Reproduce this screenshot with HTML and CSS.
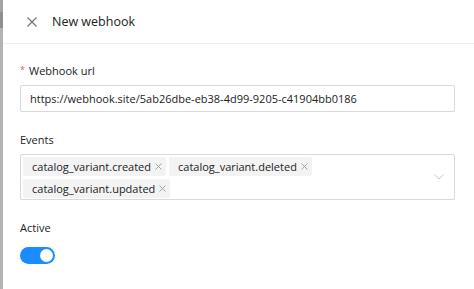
FILE: index.html
```html
<!DOCTYPE html>
<html>
<head>
<meta charset="utf-8">
<link rel="stylesheet" href="styles.css">
</head>
<body>
<div class="page">
  <div class="strip"></div>
  <div class="drawer">
    <div class="header">
      <svg class="close" width="10" height="10" viewBox="0 0 10 10"><path d="M0.5 0.5L9.5 9.5M9.5 0.5L0.5 9.5" stroke="#707070" stroke-width="1.1" fill="none"/></svg>
      <span class="title">New webhook</span>
    </div>
    <div class="body">
      <div class="field">
        <div class="label"><span class="req">*</span>Webhook url</div>
        <div class="input">https://webhook.site/5ab26dbe-eb38-4d99-9205-c41904bb0186</div>
      </div>
      <div class="field">
        <div class="label">Events</div>
        <div class="select">
          <div class="tags">
            <span class="tag">catalog_variant.created<svg class="x" width="7" height="7" viewBox="0 0 7 7"><path d="M0.5 0.5L6.5 6.5M6.5 0.5L0.5 6.5" stroke="#9a9a9a" stroke-width="0.9" fill="none"/></svg></span>
            <span class="tag">catalog_variant.deleted<svg class="x" width="7" height="7" viewBox="0 0 7 7"><path d="M0.5 0.5L6.5 6.5M6.5 0.5L0.5 6.5" stroke="#9a9a9a" stroke-width="0.9" fill="none"/></svg></span>
            <span class="tag">catalog_variant.updated<svg class="x" width="7" height="7" viewBox="0 0 7 7"><path d="M0.5 0.5L6.5 6.5M6.5 0.5L0.5 6.5" stroke="#9a9a9a" stroke-width="0.9" fill="none"/></svg></span>
          </div>
          <svg class="chev" width="10" height="6" viewBox="0 0 10 6"><path d="M0.5 0.5L5 5L9.5 0.5" stroke="#c8c8c8" stroke-width="1" fill="none"/></svg>
        </div>
      </div>
      <div class="field active">
        <div class="label">Active</div>
        <div class="switch"><span class="knob"></span></div>
      </div>
    </div>
  </div>
</div>
</body>
</html>
```
FILE: styles.css
```css
html, body { margin: 0; padding: 0; background: #fff; }
body { font-family: "Open Sans", sans-serif; color: #222; }
.page { display: flex; height: 289px; width: 474px; overflow: hidden; }
.strip { width: 3px; background: linear-gradient(#a3a3a3 0, #a3a3a3 12px, #8e8e8e 12px, #8e8e8e 28px, #b3b3b3 28px); flex: none; }
.drawer { flex: 1; min-width: 0; }
.header { height: 44px; border-bottom: 1px solid #efefef; display: flex; align-items: center; padding-left: 24px; box-sizing: border-box; }
.close { margin-right: 15px; }
.title { font-size: 12.5px; color: #222; }
.body { padding: 19px 19px 0 17px; }
.field { margin-bottom: 20px; }
.label { font-size: 11px; line-height: 16px; height: 16px; margin-bottom: 6px; }
.req { color: #ff4d4f; font-size: 9px; margin-right: 4px; position: relative; top: -2px; }
.input { border: 1px solid #d9d9d9; height: 27px; box-sizing: border-box; padding: 0 9px; font-size: 11px; line-height: 25px; border-radius: 2px; white-space: nowrap; }
.select { border: 1px solid #d9d9d9; border-radius: 2px; display: flex; align-items: center; padding: 2px 10px 2px 2px; height: 46px; box-sizing: border-box; }
.tags { flex: 1; display: flex; flex-wrap: wrap; gap: 3px 3px; align-content: flex-start; }
.tag { background: #f3f3f3; border-radius: 2px; font-size: 11px; line-height: 19px; height: 19px; padding: 0 4px 0 9px; display: inline-flex; align-items: center; }
.x { margin-left: 4px; }
.active .label { margin-bottom: 11px; }
.switch { width: 35px; height: 17px; background: #1a8cff; border-radius: 9px; position: relative; }
.knob { position: absolute; right: 2px; top: 2px; width: 13px; height: 13px; background: #fff; border-radius: 50%; }
```
